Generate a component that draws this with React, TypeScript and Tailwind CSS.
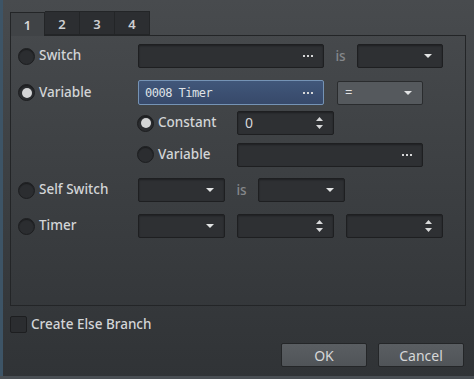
import React from "react";

const font = { fontFamily: '"Noto Sans", "Open Sans", sans-serif' };

function Radio({ checked }: { checked?: boolean }) {
  return (
    <div className="w-[17px] h-[17px] rounded-full border border-[#1d1e20] bg-[#2b2d30] flex items-center justify-center shadow-[inset_0_1px_1px_rgba(0,0,0,0.4)]">
      {checked && <div className="w-[10px] h-[10px] rounded-full bg-[#d4d5d6]" />}
    </div>
  );
}

function Arrow() {
  return (
    <svg width="8" height="4" viewBox="0 0 8 4">
      <path d="M0 0 H8 L4 4 Z" fill="#e2e3e4" />
    </svg>
  );
}

function Dots() {
  return (
    <div className="flex gap-[2px]">
      <div className="w-[2px] h-[2px] bg-[#d6d7d8]" />
      <div className="w-[2px] h-[2px] bg-[#d6d7d8]" />
      <div className="w-[2px] h-[2px] bg-[#d6d7d8]" />
    </div>
  );
}

function Spin() {
  return (
    <div className="flex flex-col gap-[4px] items-center">
      <svg width="7" height="4" viewBox="0 0 7 4">
        <path d="M0 4 H7 L3.5 0 Z" fill="#d8d9da" />
      </svg>
      <svg width="7" height="4" viewBox="0 0 7 4">
        <path d="M0 0 H7 L3.5 4 Z" fill="#d8d9da" />
      </svg>
    </div>
  );
}

function Field({ w, kind, children, light }: { w: string; kind: "dots" | "drop" | "spin"; children?: React.ReactNode; light?: boolean }) {
  const base = light
    ? "bg-[#55595d] border-[#2a2c2e]"
    : "bg-[#2e3033] border-[#1e1f21] shadow-[inset_0_1px_2px_rgba(0,0,0,0.35)]";
  return (
    <div className={`${w} h-[24px] rounded-[2px] border ${base} flex items-center justify-between pl-[7px] pr-[10px] shrink-0`}>
      <div className="text-[#d6d7d8] text-[13px]">{children}</div>
      {kind === "dots" && <Dots />}
      {kind === "drop" && <Arrow />}
      {kind === "spin" && <Spin />}
    </div>
  );
}

function Label({ children }: { children: React.ReactNode }) {
  return <span className="text-[13.5px] font-medium text-[#d3d5d7] leading-none">{children}</span>;
}

function Is({ w }: { w: string }) {
  return <div className={`${w} text-center text-[13.5px] font-medium text-[#85888b]`}>is</div>;
}

export default function App() {
  return (
    <div style={font} className="w-[474px] h-[379px] overflow-hidden bg-gradient-to-b from-[#484b4e] to-[#303336] flex flex-col">
      <div className="flex-1 flex border-l-[3px] border-[#3d5466]">
        <div className="flex-1 flex flex-col pl-[7px] pt-[11px]">
          {/* tabs */}
          <div className="flex h-[24px]">
            <div className="w-[35px] border border-b-0 border-[#232527] bg-[#404346] flex items-center justify-center pt-[3px] text-[13px] font-semibold text-[#d8d9da] relative top-[1px] h-[24px] z-10">1</div>
            {["2", "3", "4"].map((t) => (
              <div key={t} className="w-[35px] border border-l-0 border-[#232527] bg-[#2c2e31] flex items-center justify-center pt-[3px] text-[13px] font-semibold text-[#cfd0d1]">
                {t}
              </div>
            ))}
          </div>
          {/* panel */}
          <div className="w-[456px] h-[271px] border border-[#232527] flex flex-col pt-[8px]">
            {/* Switch */}
            <div className="flex items-center h-[24px]">
              <div className="w-[127px] flex items-center gap-[4px] pl-[7px]">
                <Radio />
                <Label>Switch</Label>
              </div>
              <Field w="w-[186px]" kind="dots" />
              <Is w="w-[33px]" />
              <Field w="w-[86px]" kind="drop" />
            </div>
            {/* Variable */}
            <div className="flex items-center h-[25px] mt-[12px]">
              <div className="w-[127px] flex items-center gap-[4px] pl-[7px]">
                <Radio checked />
                <Label>Variable</Label>
              </div>
              <div className="w-[186px] h-[25px] rounded-[2px] border border-[#7593b5] bg-gradient-to-b from-[#41577a] to-[#37496a] flex items-center justify-between pl-[6px] pr-[10px]">
                <span className="text-[12px] tracking-[-0.5px] text-[#dfe2e6]" style={{ fontFamily: '"DejaVu Sans Mono", monospace' }}>0008 Timer</span>
                <Dots />
              </div>
              <div className="w-[13px]" />
              <Field w="w-[86px]" kind="drop" light>
                <span className="text-[#e0e1e2]">=</span>
              </Field>
            </div>
            {/* Constant */}
            <div className="flex items-center h-[24px] mt-[6px]">
              <div className="w-[126px]" />
              <div className="w-[100px] flex items-center gap-[4px]">
                <Radio checked />
                <Label>Constant</Label>
              </div>
              <Field w="w-[97px]" kind="spin">
                <span className="text-[14px]">0</span>
              </Field>
            </div>
            {/* Variable 2 */}
            <div className="flex items-center h-[25px] mt-[7px]">
              <div className="w-[126px]" />
              <div className="w-[100px] flex items-center gap-[4px]">
                <Radio />
                <Label>Variable</Label>
              </div>
              <Field w="w-[186px]" kind="dots" />
            </div>
            {/* Self Switch */}
            <div className="flex items-center h-[24px] mt-[11px]">
              <div className="w-[127px] flex items-center gap-[4px] pl-[7px]">
                <Radio />
                <Label>Self Switch</Label>
              </div>
              <Field w="w-[87px]" kind="drop" />
              <Is w="w-[33px]" />
              <Field w="w-[87px]" kind="drop" />
            </div>
            {/* Timer */}
            <div className="flex items-center h-[24px] mt-[12px]">
              <div className="w-[127px] flex items-center gap-[4px] pl-[7px]">
                <Radio />
                <Label>Timer</Label>
              </div>
              <Field w="w-[87px]" kind="drop" />
              <div className="w-[12px]" />
              <Field w="w-[97px]" kind="spin" />
              <div className="w-[12px]" />
              <Field w="w-[97px]" kind="spin" />
            </div>
          </div>
          {/* checkbox */}
          <div className="flex items-center gap-[4px] mt-[10px] h-[17px]">
            <div className="w-[17px] h-[17px] rounded-[2px] border border-[#1d1e20] bg-[#2b2d30]" />
            <Label>Create Else Branch</Label>
          </div>
          {/* buttons */}
          <div className="flex justify-end gap-[11px] mt-[10px] pr-[10px]">
            <div className="w-[86px] h-[24px] rounded-[2px] border border-[#242628] bg-gradient-to-b from-[#5a5e62] to-[#505458] flex items-center justify-center text-[14px] text-[#d6d7d8]">OK</div>
            <div className="w-[86px] h-[24px] rounded-[2px] border border-[#242628] bg-gradient-to-b from-[#5a5e62] to-[#505458] flex items-center justify-center text-[14px] text-[#d6d7d8]">Cancel</div>
          </div>
        </div>
      </div>
      <div className="h-[3px] bg-[#4a4f54]" />
    </div>
  );
}
